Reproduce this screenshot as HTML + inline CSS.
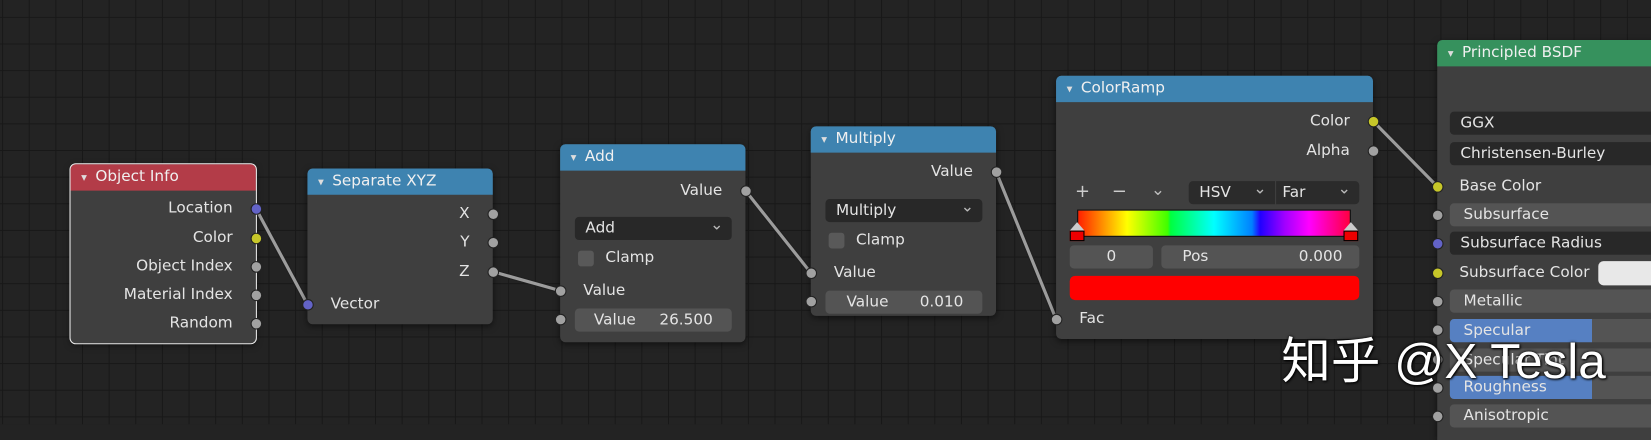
<!DOCTYPE html>
<html><head><meta charset="utf-8"><style>
html,body{margin:0;padding:0;width:1651px;height:424px;overflow:hidden;background:#232323}
#w{position:absolute;left:0;top:0;width:1568px;height:403px;transform:scale(1.0529);transform-origin:0 0;
background-color:#232323;
background-image:linear-gradient(to right,#181818 1px,transparent 1px),linear-gradient(to bottom,#181818 1px,transparent 1px);
background-size:25.3px 25.3px;background-position:2px 16px;
font-family:"DejaVu Sans","Liberation Sans",sans-serif;font-size:14.5px;color:#e4e4e4}
.n{position:absolute;background:#3f3f3f;border-radius:5px;box-shadow:0 2px 6px rgba(0,0,0,.5)}
.h{height:25px;border-radius:5px 5px 0 0;line-height:25px;padding-left:10px;color:#f0f0f0;font-size:14.5px}
.h:before{content:"▾";font-size:11px;margin-right:8px;color:#ddd}
.t{position:absolute;line-height:18px;white-space:nowrap}
.r{text-align:right}
.s{position:absolute;width:9px;height:9px;border-radius:50%;background:#a1a1a1;border:1px solid #222;margin:-5.5px 0 0 -5.5px}
.dd{position:absolute;background:#282828;border-radius:4px;height:22px;line-height:22px;padding-left:10px;box-sizing:border-box}
.dd.c:after{content:"⌄";position:absolute;right:8px;top:-4px;color:#bbb;font-size:15px}
.fld{position:absolute;background:#545454;border-radius:4px;height:22px;line-height:22px;box-sizing:border-box}
.cb{position:absolute;width:15px;height:15px;background:#595959;border-radius:3px}
</style></head><body><div id="w">
<svg width="1568" height="403" style="position:absolute;left:0;top:0">
<g stroke="#1f1f1f" stroke-width="5" fill="none" stroke-linecap="round">
<path d="M243 198 L292 289"/><path d="M468 258 L532 276"/><path d="M708 181 L770 259"/><path d="M946 163 L1003 303"/><path d="M1304 115 L1365 177"/></g>
<g stroke="#9c9c9c" stroke-width="3" fill="none" stroke-linecap="round">
<path d="M243 198 L292 289"/><path d="M468 258 L532 276"/><path d="M708 181 L770 259"/><path d="M946 163 L1003 303"/><path d="M1304 115 L1365 177"/></g>
</svg>

<div class="n" style="left:67px;top:156px;width:176px;height:170px;outline:1px solid #eee">
<div class="h" style="background:#b33c48">Object Info</div>
<div class="t r" style="right:22px;top:33px">Location</div>
<div class="t r" style="right:22px;top:61px">Color</div>
<div class="t r" style="right:22px;top:88px">Object Index</div>
<div class="t r" style="right:22px;top:115px">Material Index</div>
<div class="t r" style="right:22px;top:142px">Random</div>
</div>
<div class="s" style="left:243px;top:198px;background:#6363c7"></div>
<div class="s" style="left:243px;top:226px;background:#c7c729"></div>
<div class="s" style="left:243px;top:253px"></div>
<div class="s" style="left:243px;top:280px"></div>
<div class="s" style="left:243px;top:307px"></div>

<div class="n" style="left:292px;top:160px;width:176px;height:148px">
<div class="h" style="background:#3e83b0">Separate XYZ</div>
<div class="t r" style="right:22px;top:34px">X</div>
<div class="t r" style="right:22px;top:61px">Y</div>
<div class="t r" style="right:22px;top:89px">Z</div>
<div class="t" style="left:22px;top:120px">Vector</div>
</div>
<div class="s" style="left:468px;top:203px"></div>
<div class="s" style="left:468px;top:230px"></div>
<div class="s" style="left:468px;top:258px"></div>
<div class="s" style="left:292px;top:289px;background:#6363c7"></div>

<div class="n" style="left:532px;top:137px;width:176px;height:188px">
<div class="h" style="background:#3e83b0">Add</div>
<div class="t r" style="right:22px;top:35px">Value</div>
<div class="dd c" style="left:14px;top:69px;width:149px">Add</div>
<div class="cb" style="left:17px;top:101px"></div><div class="t" style="left:43px;top:99px">Clamp</div>
<div class="t" style="left:22px;top:130px">Value</div>
<div class="fld" style="left:14px;top:156px;width:149px"><span style="position:absolute;left:18px">Value</span><span style="position:absolute;right:18px">26.500</span></div>
</div>
<div class="s" style="left:708px;top:181px"></div>
<div class="s" style="left:532px;top:276px"></div>
<div class="s" style="left:532px;top:303px"></div>

<div class="n" style="left:770px;top:120px;width:176px;height:180px">
<div class="h" style="background:#3e83b0">Multiply</div>
<div class="t r" style="right:22px;top:34px">Value</div>
<div class="dd c" style="left:14px;top:69px;width:149px">Multiply</div>
<div class="cb" style="left:17px;top:101px"></div><div class="t" style="left:43px;top:99px">Clamp</div>
<div class="t" style="left:22px;top:130px">Value</div>
<div class="fld" style="left:14px;top:156px;width:149px"><span style="position:absolute;left:20px">Value</span><span style="position:absolute;right:18px">0.010</span></div>
</div>
<div class="s" style="left:946px;top:163px"></div>
<div class="s" style="left:770px;top:259px"></div>
<div class="s" style="left:770px;top:286px"></div>

<div class="n" style="left:1003px;top:72px;width:301px;height:250px">
<div class="h" style="background:#3e83b0">ColorRamp</div>
<div class="t r" style="right:22px;top:34px">Color</div>
<div class="t r" style="right:22px;top:62px">Alpha</div>
<div class="t" style="left:18px;top:101px;font-size:17px;color:#ccc">+</div>
<div class="t" style="left:53px;top:101px;font-size:17px;color:#ccc">−</div>
<div class="t" style="left:90px;top:99px;font-size:16px;color:#bbb">⌄</div>
<div class="dd c" style="left:126px;top:100px;width:82px;background:#2b2b2b;border-radius:4px 0 0 4px">HSV</div>
<div class="dd c" style="left:209px;top:100px;width:79px;background:#2b2b2b;border-radius:0 4px 4px 0;padding-left:6px">Far</div>
<div style="position:absolute;left:20px;top:127px;width:260px;height:26px;border:1px solid #111;box-sizing:border-box;background:linear-gradient(to right,#ff2000 0%,#ff9000 9%,#ffff00 18%,#40ff00 33%,#00ff40 34%,#00ffff 50%,#0080ff 64%,#2000ff 67%,#a000ff 76%,#ff00ff 85%,#ff0040 100%)"></div>
<div style="position:absolute;left:13px;top:139px;width:0;height:0;border-left:7px solid transparent;border-right:7px solid transparent;border-bottom:8px solid #ccc"></div>
<div style="position:absolute;left:13px;top:147px;width:12px;height:8px;background:#e00;border:1px solid #000"></div>
<div style="position:absolute;left:273px;top:139px;width:0;height:0;border-left:7px solid transparent;border-right:7px solid transparent;border-bottom:8px solid #ccc"></div>
<div style="position:absolute;left:273px;top:147px;width:12px;height:8px;background:#e00;border:1px solid #000"></div>
<div class="fld" style="left:13px;top:161px;width:79px;text-align:center">0</div>
<div class="fld" style="left:100px;top:161px;width:188px"><span style="position:absolute;left:20px">Pos</span><span style="position:absolute;right:16px">0.000</span></div>
<div style="position:absolute;left:13px;top:190px;width:275px;height:23px;background:#f00;border-radius:5px"></div>
<div class="t" style="left:22px;top:222px">Fac</div>
</div>
<div class="s" style="left:1304px;top:115px;background:#c7c729"></div>
<div class="s" style="left:1304px;top:143px"></div>
<div class="s" style="left:1003px;top:303px"></div>

<div class="n" style="left:1365px;top:38px;width:240px;height:380px;border-radius:5px 0 0 0">
<div class="h" style="background:#36915d">Principled BSDF</div>
<div class="dd" style="left:12px;top:68px;width:230px">GGX</div>
<div class="dd" style="left:12px;top:97px;width:230px">Christensen-Burley</div>
<div class="t" style="left:21px;top:130px">Base Color</div>
<div class="fld" style="left:12px;top:155px;width:230px;padding-left:13px">Subsurface</div>
<div class="dd" style="left:12px;top:182px;width:230px">Subsurface Radius</div>
<div class="t" style="left:21px;top:212px">Subsurface Color</div>
<div style="position:absolute;left:153px;top:210px;width:90px;height:23px;background:#e8e8e8;border-radius:5px 0 0 5px"></div>
<div class="fld" style="left:12px;top:237px;width:230px;padding-left:13px">Metallic</div>
<div class="fld" style="left:12px;top:265px;width:230px;padding-left:13px;background:linear-gradient(to right,#5680c2 0,#5680c2 135px,#545454 135px)">Specular</div>
<div class="fld" style="left:12px;top:293px;width:230px;padding-left:13px">Specular Tint</div>
<div class="fld" style="left:12px;top:319px;width:230px;padding-left:13px;background:linear-gradient(to right,#5680c2 0,#5680c2 135px,#545454 135px)">Roughness</div>
<div class="fld" style="left:12px;top:346px;width:230px;padding-left:13px">Anisotropic</div>
</div>
<div class="s" style="left:1365px;top:177px;background:#c7c729"></div>
<div class="s" style="left:1365px;top:204px"></div>
<div class="s" style="left:1365px;top:231px;background:#6363c7"></div>
<div class="s" style="left:1365px;top:259px;background:#c7c729"></div>
<div class="s" style="left:1365px;top:286px"></div>
<div class="s" style="left:1365px;top:313px"></div>
<div class="s" style="left:1365px;top:341px"></div>
<div class="s" style="left:1365px;top:368px"></div>
<div class="s" style="left:1365px;top:395px"></div>

<div style="position:absolute;left:1217px;top:304px;font-family:'Liberation Sans','Noto Sans CJK SC',sans-serif;font-size:47px;color:#fff;white-space:nowrap;text-shadow:0 0 3px #000,1px 1px 2px #000">知乎 @X Tesla</div>
</div></body></html>
